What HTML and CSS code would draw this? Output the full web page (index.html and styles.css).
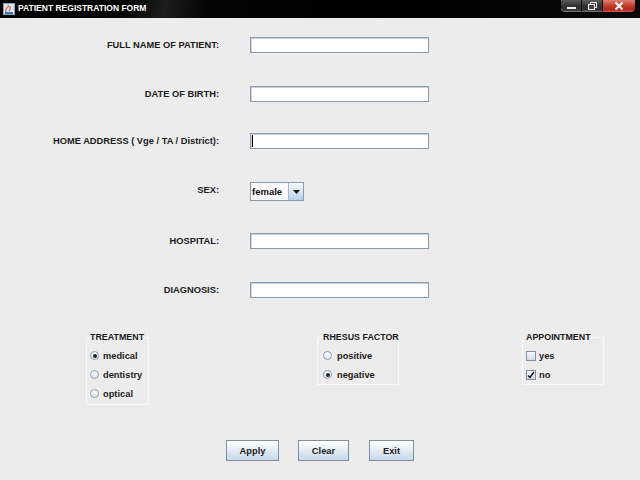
FILE: index.html
```html
<!DOCTYPE html>
<html>
<head>
<meta charset="utf-8">
<title>PATIENT REGISTRATION FORM</title>
<link rel="stylesheet" href="styles.css">
</head>
<body>
<div class="window">
  <header class="titlebar">
    <span class="app-icon">
      <svg width="12" height="12" viewBox="0 0 12 12">
        <rect x="0.5" y="0.5" width="11" height="11" fill="#d9e6f2" stroke="#8aa0b8"/>
        <path d="M3 9 Q2 6 4 5 Q6 4 5 2" fill="none" stroke="#e07020" stroke-width="1.2"/>
        <path d="M6 8 Q8 6 7 3" fill="none" stroke="#d03030" stroke-width="1"/>
        <rect x="2" y="9" width="8" height="2" fill="#3a6fb0"/>
      </svg>
    </span>
    <span class="title">PATIENT REGISTRATION FORM</span>
    <div class="win-buttons">
      <span class="wb wb-min"><svg width="9" height="8" viewBox="0 0 9 8"><rect x="0" y="5" width="9" height="2" fill="#f2f2f2"/></svg></span>
      <span class="wb wb-max"><svg width="9" height="8" viewBox="0 0 9 8"><rect x="2.5" y="0.5" width="6" height="5" fill="none" stroke="#e8e8e8"/><rect x="0.5" y="2.5" width="6" height="5" fill="#444" stroke="#f2f2f2"/></svg></span>
      <span class="wb wb-close"><svg width="10" height="8" viewBox="0 0 10 8"><path d="M1.5 0.5 L8.5 7.5 M8.5 0.5 L1.5 7.5" stroke="#fff" stroke-width="2"/></svg></span>
    </div>
  </header>

  <main class="content">
    <div class="form-grid">
      <label class="lbl">FULL NAME OF PATIENT:</label>
      <div class="field"></div>

      <label class="lbl">DATE OF BIRTH:</label>
      <div class="field"></div>

      <label class="lbl">HOME ADDRESS ( Vge / TA / District):</label>
      <div class="field"><span class="caret"></span></div>

      <label class="lbl">SEX:</label>
      <div class="combo">
        <span class="combo-value">female</span>
        <span class="combo-arrow"><svg width="7" height="4" viewBox="0 0 7 4"><path d="M0 0 H7 L3.5 4 Z" fill="#111"/></svg></span>
      </div>

      <label class="lbl">HOSPITAL:</label>
      <div class="field"></div>

      <label class="lbl">DIAGNOSIS:</label>
      <div class="field"></div>
    </div>

    <div class="groups">
      <fieldset class="group g-treatment">
        <legend>TREATMENT</legend>
        <div class="opt"><span class="radio on"></span><span class="opt-text">medical</span></div>
        <div class="opt"><span class="radio"></span><span class="opt-text">dentistry</span></div>
        <div class="opt"><span class="radio"></span><span class="opt-text">optical</span></div>
      </fieldset>

      <fieldset class="group g-rhesus">
        <legend>RHESUS FACTOR</legend>
        <div class="opt"><span class="radio"></span><span class="opt-text">positive</span></div>
        <div class="opt"><span class="radio on"></span><span class="opt-text">negative</span></div>
      </fieldset>

      <fieldset class="group g-appointment">
        <legend>APPOINTMENT</legend>
        <div class="opt"><span class="check"></span><span class="opt-text">yes</span></div>
        <div class="opt"><span class="check on"><svg width="8" height="8" viewBox="0 0 8 8"><path d="M1 4.5 L3 6.5 L7 1" fill="none" stroke="#111" stroke-width="1.4"/></svg></span><span class="opt-text">no</span></div>
      </fieldset>
    </div>

    <div class="buttons">
      <button class="btn btn-apply">Apply</button>
      <button class="btn btn-clear">Clear</button>
      <button class="btn btn-exit">Exit</button>
    </div>
  </main>
</div>
</body>
</html>
```

FILE: styles.css
```css
* { box-sizing: border-box; }

html, body {
  margin: 0;
  padding: 0;
  width: 640px;
  height: 480px;
  overflow: hidden;
}

body {
  background: #ececec;
  font-family: "Liberation Sans", Arial, sans-serif;
  font-size: 9.3px;
  font-weight: bold;
  color: #1c1c1c;
}

.window {
  width: 640px;
  height: 480px;
  background-color: #ececec;
  background-image: repeating-conic-gradient(#f1f1f1 0 25%, #e7e7e7 0 50%);
  background-size: 2px 2px;
}

/* title bar */
.titlebar {
  height: 18px;
  display: flex;
  align-items: flex-start;
  background: linear-gradient(100deg, #000 0%, #080808 20%, #1c1c1c 26%, #050505 32%, #000 60%, #0a0a0a 100%);
  color: #fff;
}

.app-icon {
  width: 12px;
  height: 12px;
  margin: 3px 0 0 3px;
  display: flex;
}

.title {
  margin-left: 3px;
  line-height: 17px;
  font-size: 8.5px;
  font-weight: bold;
  color: #fff;
}

.win-buttons {
  margin-left: auto;
  margin-right: 4px;
  display: flex;
  height: 13px;
  border: 1px solid #000;
  border-top: none;
  border-radius: 0 0 4px 4px;
  overflow: hidden;
}

.wb {
  display: flex;
  align-items: center;
  justify-content: center;
  height: 12px;
}

.wb-min, .wb-max {
  width: 21px;
  background: linear-gradient(#5a5a5a, #2e2e2e 55%, #3c3c3c);
  border-right: 1px solid #111;
  box-shadow: inset 0 -1px 0 #777;
}

.wb-min { border-bottom-left-radius: 4px; }

.wb-close {
  width: 32px;
  background: linear-gradient(#e08070, #c23a28 50%, #b02818 80%, #d06050);
  border-bottom-right-radius: 4px;
}

/* form fields */
.content {
  padding-top: 19px;
}

.form-grid {
  display: grid;
  grid-template-columns: 219px 179px;
  grid-template-rows: 49px 47px 49px 51px 49px 16px;
  column-gap: 31px;
  align-items: start;
}

.lbl {
  height: 16px;
  line-height: 16px;
  text-align: right;
  white-space: nowrap;
}

.field {
  height: 16px;
  width: 179px;
  background: #fff;
  border: 1px solid #8d9aab;
  box-shadow: inset 1px 1px 0 #c9d0d8;
  display: flex;
  align-items: center;
}

.caret {
  width: 1px;
  height: 12px;
  margin-left: 1px;
  background: #000;
}

.combo {
  width: 54px;
  height: 19px;
  display: flex;
  border: 1px solid #8d9aab;
  background: #fbfbfd;
}

.combo-value {
  flex: 1;
  line-height: 17px;
  padding-left: 1px;
  font-size: 9.5px;
  color: #111;
}

.combo-arrow {
  width: 15px;
  display: flex;
  align-items: center;
  justify-content: center;
  border-left: 1px solid #a9b6c6;
  background: linear-gradient(#f4f8fc, #dde8f3 45%, #b8cfe5);
}

/* groups */
.groups {
  display: flex;
  align-items: flex-start;
  margin-top: 34px;
}

.group {
  margin: 0;
  border: 1px solid #f8f9fb;
  min-width: 0;
}

.group legend {
  padding: 0;
  font-size: 8.9px;
  line-height: 11px;
  white-space: nowrap;
}

.g-treatment {
  margin-left: 86px;
  width: 63px;
  padding: 3px 3px 1px 3px;
}

.g-rhesus {
  margin-left: 168px;
  width: 82px;
  padding: 3px 3px 0 5px;
}

.g-appointment {
  margin-left: 123px;
  width: 82px;
  padding: 3px 3px 0 3px;
}

.opt {
  height: 19px;
  display: flex;
  align-items: center;
  white-space: nowrap;
}

.radio {
  width: 9px;
  height: 9px;
  border-radius: 50%;
  border: 1px solid #8e9cad;
  background: linear-gradient(#ffffff, #dbe5f0);
  display: flex;
  align-items: center;
  justify-content: center;
  flex: none;
}

.radio.on::after {
  content: "";
  width: 4px;
  height: 4px;
  border-radius: 50%;
  background: #222;
}

.g-treatment .opt-text { margin-left: 4px; }
.g-rhesus .opt-text { margin-left: 5px; }
.g-appointment .opt-text { margin-left: 3px; }

.opt-text {
  font-size: 9.3px;
}

.check {
  width: 10px;
  height: 10px;
  border: 1px solid #7f8fa2;
  background: linear-gradient(#f6f9fc, #d2deeb);
  display: flex;
  align-items: center;
  justify-content: center;
  flex: none;
}

/* buttons */
.buttons {
  display: flex;
  margin-top: 35px;
  padding-left: 226px;
}

.btn {
  height: 21px;
  padding: 0;
  margin: 0;
  border: 1px solid #7d8d9f;
  background: linear-gradient(#ffffff, #e8eff7 40%, #c6d8ea);
  font-family: "Liberation Sans", Arial, sans-serif;
  font-size: 9.3px;
  font-weight: bold;
  color: #1c1c1c;
}

.btn-apply { width: 53px; }
.btn-clear { width: 51px; margin-left: 19px; }
.btn-exit { width: 45px; margin-left: 20px; }
```
